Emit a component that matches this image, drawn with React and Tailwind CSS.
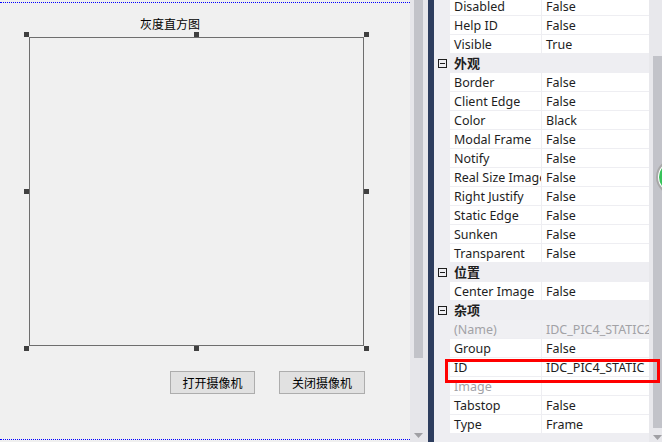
import React from 'react'

const props = [
    { name: 'Disabled', value: 'False' },
    { name: 'Help ID', value: 'False' },
    { name: 'Visible', value: 'True' },
    { cat: '外观' },
    { name: 'Border', value: 'False' },
    { name: 'Client Edge', value: 'False' },
    { name: 'Color', value: 'Black' },
    { name: 'Modal Frame', value: 'False' },
    { name: 'Notify', value: 'False' },
    { name: 'Real Size Image', value: 'False' },
    { name: 'Right Justify', value: 'False' },
    { name: 'Static Edge', value: 'False' },
    { name: 'Sunken', value: 'False' },
    { name: 'Transparent', value: 'False' },
    { cat: '位置' },
    { name: 'Center Image', value: 'False' },
    { cat: '杂项' },
    { name: '(Name)', value: 'IDC_PIC4_STATIC2', readonly: true },
    { name: 'Group', value: 'False' },
    { name: 'ID', value: 'IDC_PIC4_STATIC' },
    { name: 'Image', value: '', dim: true },
    { name: 'Tabstop', value: 'False' },
    { name: 'Type', value: 'Frame' },
]

const Handle = ({ className }) => (
    <div className={`absolute w-[5px] h-[5px] bg-[#404040] ${className}`} />
)

const DownArrow = () => (
    <svg width="9" height="5" viewBox="0 0 9 5">
        <path d="M0 0 H9 L4.5 5 Z" fill="#a0a0a4" />
    </svg>
)

const PropRow = ({ p }) => {
    if (p.cat) {
        return (
            <div className="h-[18px] mb-px flex items-center">
                <div className="w-[16px] pl-[4px] flex items-center">
                    <div className="w-[9px] h-[9px] border border-[#1e1e1e] flex items-center justify-center">
                        <div className="w-[5px] h-px bg-[#1e1e1e]" />
                    </div>
                </div>
                <span className="pl-[4px] font-bold text-[13px] leading-[18px] text-[#1e1e1e]">{p.cat}</span>
            </div>
        )
    }
    const cellBg = p.readonly ? 'bg-[#f0f0f3]' : 'bg-white'
    const nameColor = p.readonly || p.dim ? 'text-[#a2a2a6]' : 'text-[#1e1e1e]'
    const valueColor = p.readonly ? 'text-[#a2a2a6]' : 'text-[#1e1e1e]'
    return (
        <div className="h-[18px] mb-px flex">
            <div className="w-[16px]" />
            <div className={`w-[91px] pl-[4px] pt-[2px] overflow-hidden whitespace-nowrap text-[12.5px] leading-[16px] ${cellBg} ${nameColor}`}>
                {p.name}
            </div>
            <div className={`ml-px flex-1 pl-[4px] pt-[2px] overflow-hidden whitespace-nowrap text-[12.5px] leading-[16px] ${cellBg} ${valueColor}`}>
                {p.value}
            </div>
        </div>
    )
}

export default function App() {
    return (
        <div
            className="w-[662px] h-[442px] flex overflow-hidden bg-[#f0f0f0] relative"
            style={{ fontFamily: '"Noto Sans", "Noto Sans CJK SC", sans-serif' }}
        >
            {/* dialog designer */}
            <div
                className="w-[411px] h-full flex flex-col text-[12px] text-black"
                style={{ fontFamily: '"Noto Sans CJK SC", sans-serif' }}
            >
                <div className="mt-[2px] border-t border-dotted border-[#0000ff]" />
                <div className="pl-[140px] mt-[14px] leading-[14px] h-[14px]">灰度直方图</div>
                <div className="ml-[24px] mt-px w-[345px] h-[319px] p-[5px] relative">
                    <div className="h-full border border-[#6e6e6e]" />
                    <Handle className="left-0 top-0" />
                    <Handle className="left-[170px] top-0" />
                    <Handle className="right-0 top-0" />
                    <Handle className="left-0 top-[157px]" />
                    <Handle className="right-0 top-[157px]" />
                    <Handle className="left-0 bottom-0" />
                    <Handle className="left-[170px] bottom-0" />
                    <Handle className="right-0 bottom-0" />
                </div>
                <div className="mt-[20px] pl-[170px] flex gap-[24px]">
                    <div className="w-[85px] h-[23px] bg-[#e1e1e1] border border-[#adadad] flex items-center justify-center leading-none">
                        打开摄像机
                    </div>
                    <div className="w-[86px] h-[23px] bg-[#e1e1e1] border border-[#adadad] flex items-center justify-center leading-none">
                        关闭摄像机
                    </div>
                </div>
                <div className="mt-auto mb-[2px] border-t border-dotted border-[#0000ff]" />
            </div>

            {/* designer scrollbar */}
            <div className="w-[18px] h-full bg-[#e6e6ea] flex flex-col">
                <div className="ml-[4px] w-[9px] h-[358px] bg-[#c2c3c9]" />
                <div className="mt-auto mb-[4px] ml-[4px]">
                    <DownArrow />
                </div>
            </div>

            {/* splitter */}
            <div className="w-[6px] h-full bg-[#2d3d5e]" />

            {/* properties window */}
            <div className="flex-1 h-full flex bg-[#eeeef2]">
                <div className="w-[215px] flex flex-col mt-[-3px]">
                    {props.map((p, i) => (
                        <PropRow key={i} p={p} />
                    ))}
                </div>
                <div className="flex-1 flex flex-col bg-[#e8e8ec]">
                    <div className="ml-[4px] mt-[56px] h-[372px] bg-[#c2c3c9]" />
                    <div className="mt-auto mb-[2px] ml-[4px] overflow-hidden">
                        <DownArrow />
                    </div>
                </div>
            </div>

            {/* selection highlight */}
            <div className="absolute left-[445px] top-[359px] w-[215px] h-[24px] border-[3px] border-[#ff0000]" />

            {/* floating green badge at the edge */}
            <div className="absolute left-[656px] top-[159px] w-[36px] h-[36px] rounded-full bg-[#a8a8a8] p-[2px]">
                <div className="w-full h-full rounded-full bg-white p-px">
                    <div className="w-full h-full rounded-full bg-[#37c25a]" />
                </div>
            </div>
        </div>
    )
}
